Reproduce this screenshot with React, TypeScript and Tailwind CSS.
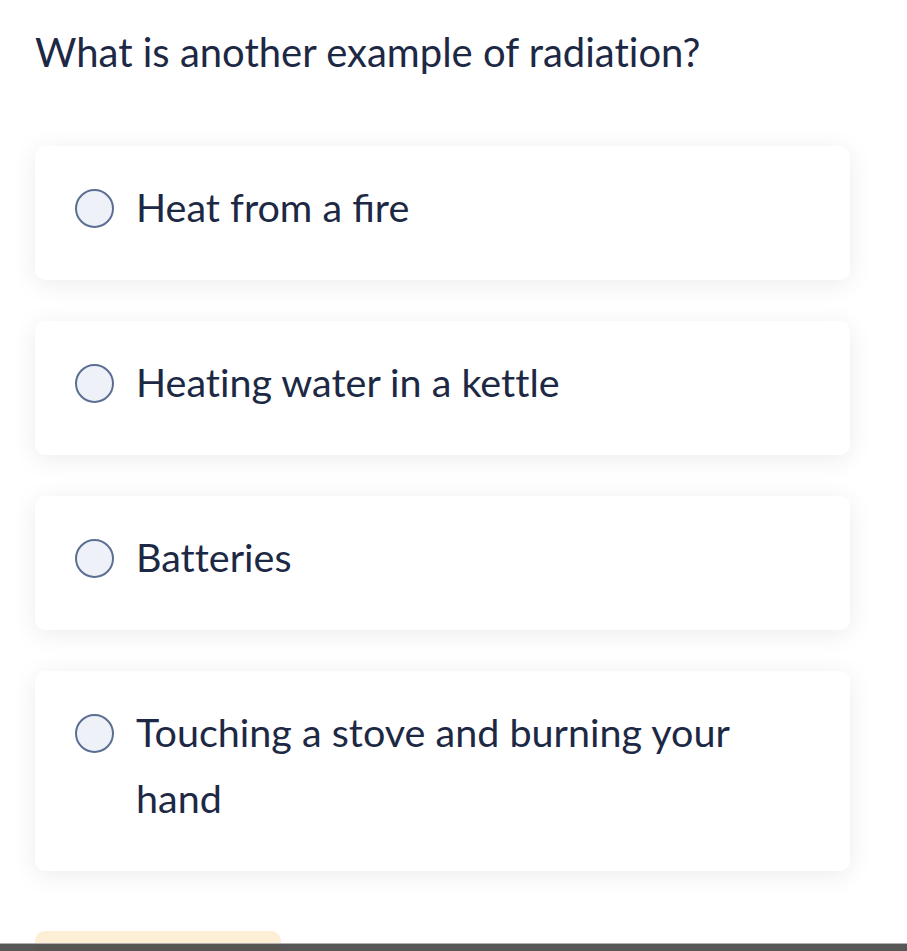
import React from 'react';

const options = [
    'Heat from a \uFB01re',
    'Heating water in a kettle',
    'Batteries',
    'Touching a stove and burning your hand',
];

const RadioOption: React.FC<{ label: string }> = ({ label }) => (
    <label className="flex items-start gap-[22px] bg-white rounded-[10px] shadow-[0_4px_26px_rgba(0,0,0,0.08)] pl-[40px] pr-[36px] pt-[28px] pb-[40px] cursor-pointer">
        <span className="mt-[15px] w-[39px] h-[39px] shrink-0 rounded-full border-[2.5px] border-[#5b6f93] bg-[#eef1f8]" />
        <span className="text-[39.5px] leading-[66px] text-[#1d2944]">{label}</span>
    </label>
);

export default function App() {
    return (
        <div className="min-h-screen bg-white font-['Lato','Noto_Sans',sans-serif] [font-variant-ligatures:no-common-ligatures] px-[35px] pt-[26px] pb-[80px] relative">
            <h1 className="text-[40px] leading-[52px] text-[#1d2944] font-normal">What is another example of radiation?</h1>

            <div className="mt-[68px] w-[815px] flex flex-col gap-[41px]">
                {options.map(o => (
                    <RadioOption key={o} label={o} />
                ))}
            </div>

            <div className="mt-[60px] w-[246px] h-[40px] rounded-[10px] bg-[#fdefd5]" />

            {/* bottom bar */}
            <div className="fixed left-0 right-0 bottom-0 h-[8px] bg-[#3a3a3a]/85 border-t border-[#b0b0b0]" />
        </div>
    );
}
